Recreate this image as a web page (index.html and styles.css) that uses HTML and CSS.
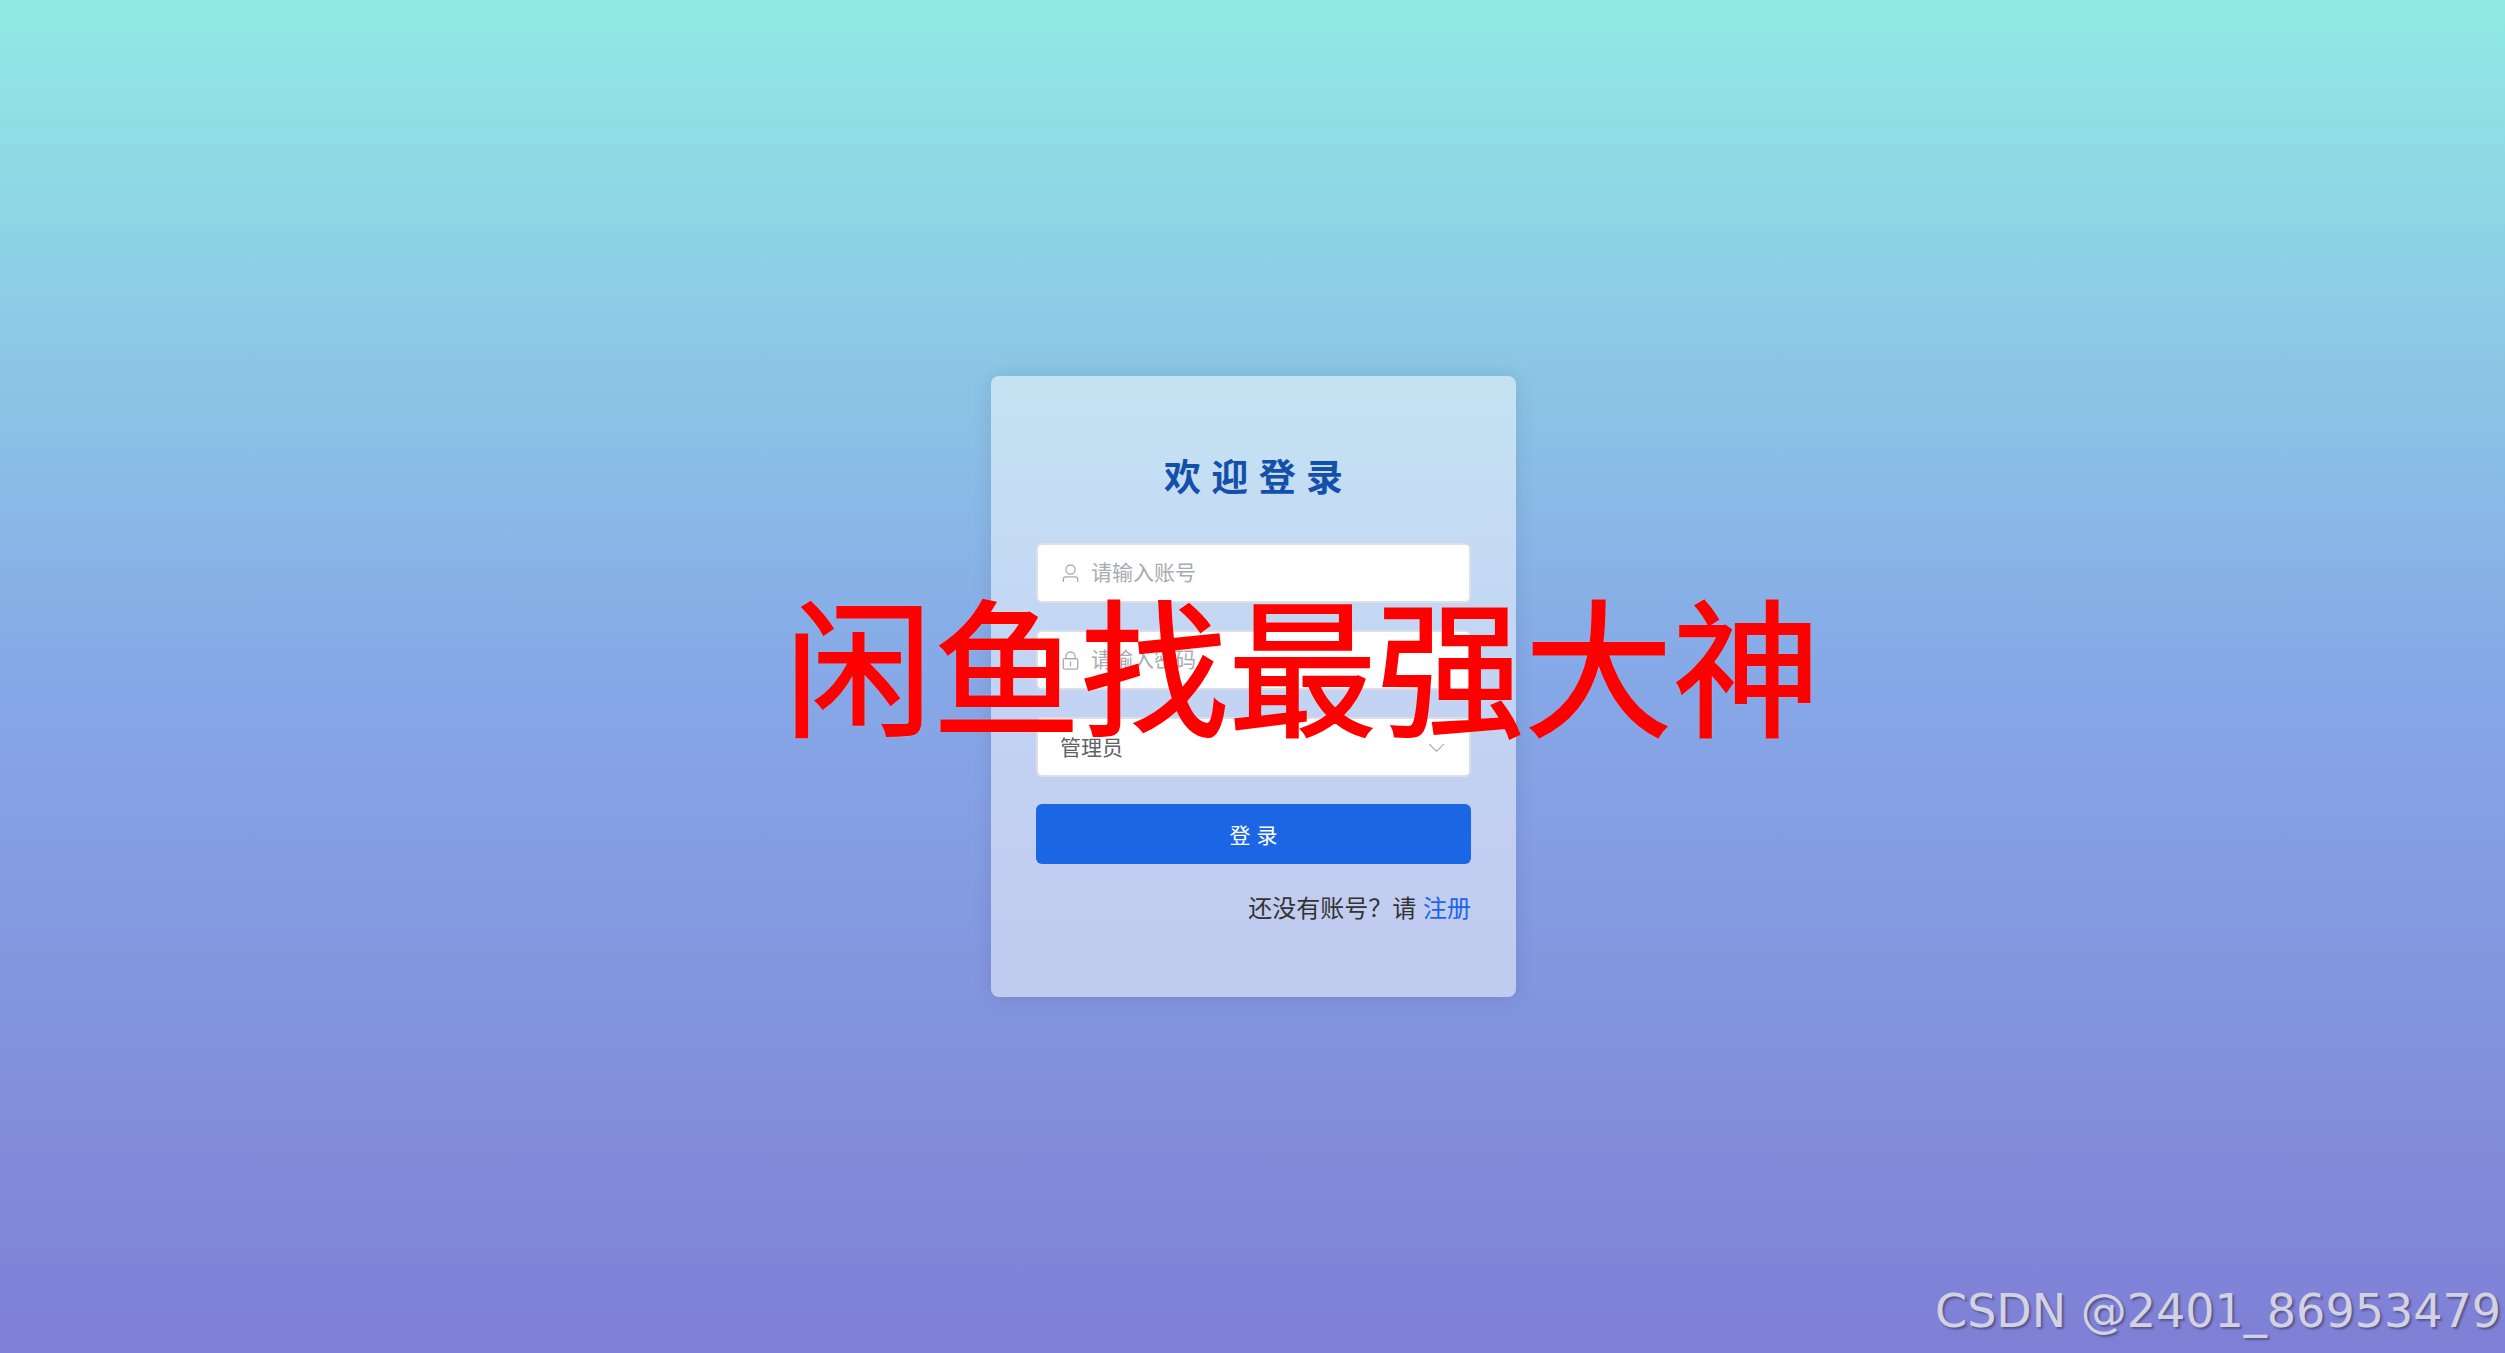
FILE: index.html
```html
<!DOCTYPE html>
<html lang="zh-CN">
<head>
<meta charset="utf-8">
<title>欢迎登录</title>
<link rel="stylesheet" href="styles.css">
</head>
<body>
<main class="page">
  <form class="card">
    <h1 class="title">欢 迎 登 录</h1>
    <label class="field">
      <svg class="icon" viewBox="0 0 1024 1024" aria-hidden="true"><path d="M512 512a192 192 0 1 0 0-384 192 192 0 0 0 0 384m0 64a256 256 0 1 1 0-512 256 256 0 0 1 0 512m320 320v-96a96 96 0 0 0-96-96H288a96 96 0 0 0-96 96v96a32 32 0 1 1-64 0v-96a160 160 0 0 1 160-160h448a160 160 0 0 1 160 160v96a32 32 0 1 1-64 0"/></svg>
      <input class="control" type="text" placeholder="请输入账号" aria-label="账号">
    </label>
    <label class="field">
      <svg class="icon" viewBox="0 0 1024 1024" aria-hidden="true"><path d="M224 448a32 32 0 0 0-32 32v384a32 32 0 0 0 32 32h576a32 32 0 0 0 32-32V480a32 32 0 0 0-32-32zm0-64h576a96 96 0 0 1 96 96v384a96 96 0 0 1-96 96H224a96 96 0 0 1-96-96V480a96 96 0 0 1 96-96"/><path d="M512 544a32 32 0 0 1 32 32v192a32 32 0 1 1-64 0V576a32 32 0 0 1 32-32m192-160v-64a192 192 0 1 0-384 0v64zM512 64a256 256 0 0 1 256 256v128H256V320A256 256 0 0 1 512 64"/></svg>
      <input class="control" type="password" placeholder="请输入密码" aria-label="密码">
    </label>
    <label class="field">
      <select class="control" aria-label="角色"><option>管理员</option></select>
      <svg class="icon" viewBox="0 0 1024 1024" aria-hidden="true"><path d="M831.872 340.864 512 652.672 192.128 340.864a30.592 30.592 0 0 0-42.752 0 29.12 29.12 0 0 0 0 41.6L489.664 714.24a32 32 0 0 0 44.672 0l340.288-331.712a29.12 29.12 0 0 0 0-41.728 30.592 30.592 0 0 0-42.752 0z"/></svg>
    </label>
    <button class="submit" type="button">登 录</button>
    <p class="register">还没有账号？请 <a href="#">注册</a></p>
  </form>
  <div class="banner">闲鱼找最强大神</div>
  <div class="credit">CSDN @2401_86953479</div>
</main>
</body>
</html>
```
FILE: styles.css
```css
* { box-sizing: border-box; }

body {
  margin: 0;
  font-family: "Liberation Sans", "Noto Sans CJK SC", sans-serif;
  color: #333;
}

.page {
  position: relative;
  display: flex;
  justify-content: center;
  align-items: center;
  min-height: 100vh;
  padding: 20px 0 0 2px;
  overflow: hidden;
  background: linear-gradient(180deg, #91eae4, #86a8e7, #7f7fd5);
}

.card {
  display: flex;
  flex-direction: column;
  gap: 27px;
  width: 525px;
  padding: 78px 45px 70px;
  border-radius: 8px;
  background: rgba(255, 255, 255, 0.5);
  box-shadow: 0 0 20px rgba(0, 0, 0, 0.1);
}

.title {
  margin: 0 0 12px;
  font-size: 37px;
  line-height: 50px;
  text-align: center;
  color: #1450aa;
}

.field {
  display: flex;
  align-items: center;
  gap: 10px;
  height: 60px;
  padding: 0 22px;
  border: 2px solid #dcdfe6;
  border-radius: 6px;
  background: #fff;
}

.icon {
  flex: none;
  width: 21px;
  height: 21px;
  fill: #a8abb2;
}

.control {
  flex: 1;
  min-width: 0;
  padding: 0;
  border: 0;
  outline: 0;
  appearance: none;
  background: none;
  font: 21px "Liberation Sans", "Noto Sans CJK SC", sans-serif;
  color: #606266;
}

.control::placeholder { color: #a8abb2; }

.submit {
  height: 60px;
  border: 0;
  border-radius: 6px;
  background: #1a66e4;
  font: 21px "Liberation Sans", "Noto Sans CJK SC", sans-serif;
  color: #fff;
}

.register {
  margin: 0;
  font-size: 24px;
  line-height: 36px;
  text-align: right;
}

.register a {
  color: #1a66e4;
  text-decoration: none;
}

.banner {
  position: absolute;
  top: 0;
  bottom: 6px;
  left: 52%;
  transform: translateX(-50%);
  display: flex;
  align-items: center;
  font-size: 148px;
  line-height: 160px;
  white-space: nowrap;
  color: #f00;
  -webkit-text-stroke: 2px #f00;
  text-shadow: 0 0 2px #fff;
}

.credit {
  position: absolute;
  right: 4px;
  bottom: 14px;
  font-family: "DejaVu Sans", sans-serif;
  font-size: 46px;
  line-height: 56px;
  color: #d2d2e4;
  text-shadow: 2px 2px 2px rgba(60, 60, 90, 0.6);
}
```
